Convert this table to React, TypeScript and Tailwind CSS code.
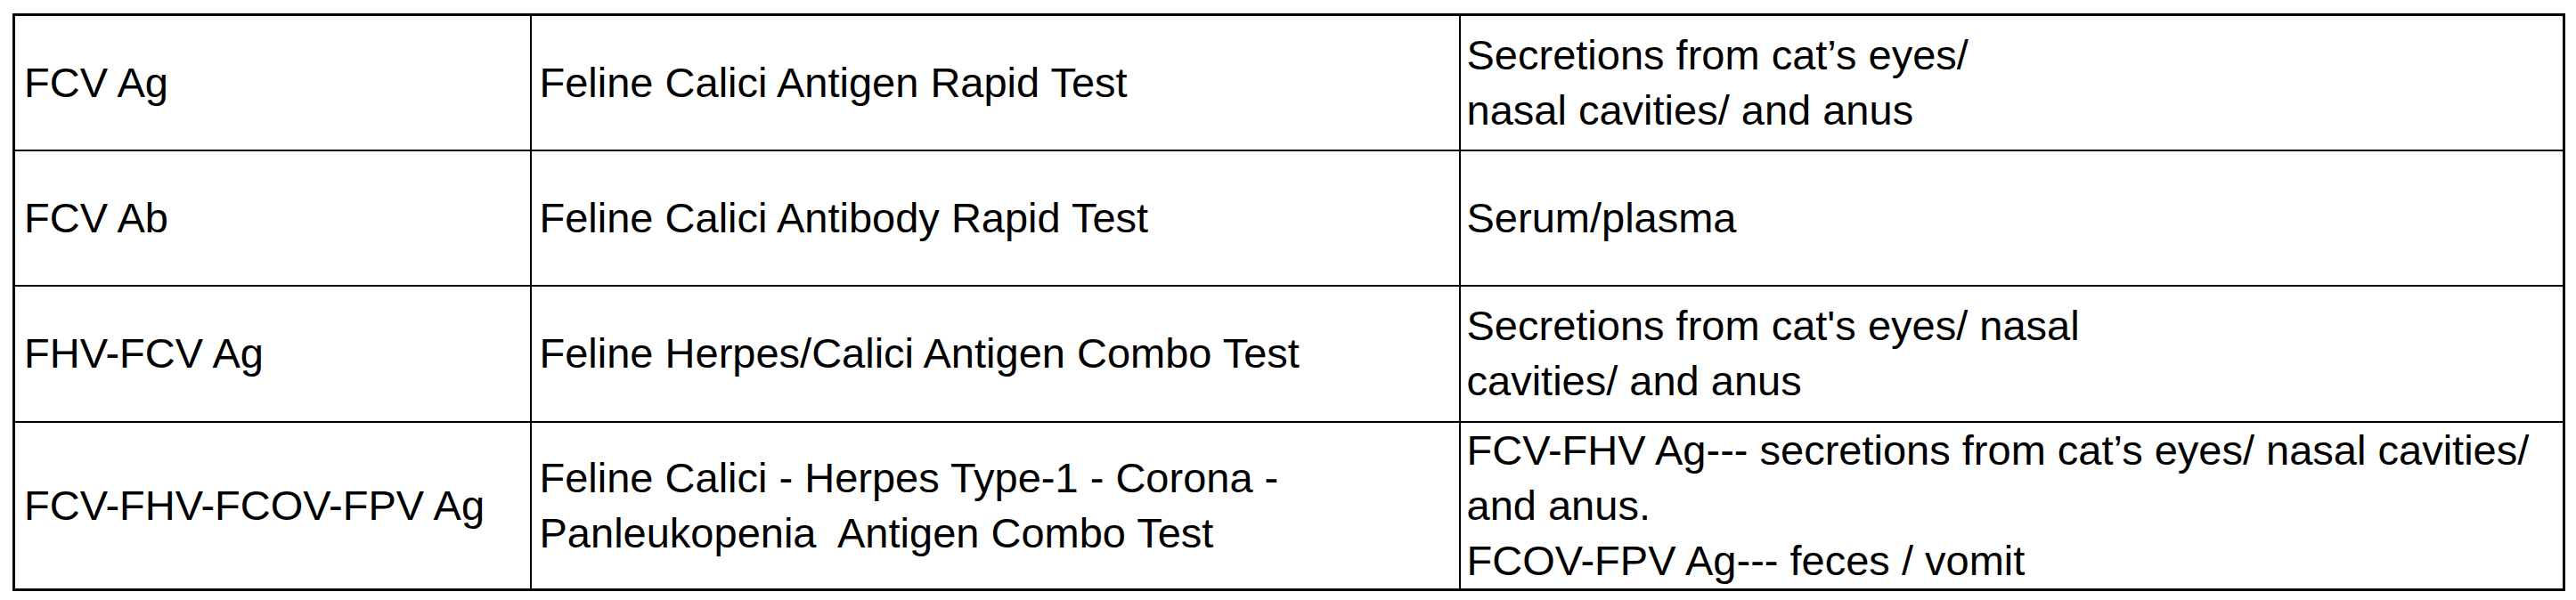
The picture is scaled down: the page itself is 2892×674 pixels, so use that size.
const rows: { code: string; name: string[]; sample: string[] }[] = [
  {
    code: "FCV Ag",
    name: ["Feline Calici Antigen Rapid Test"],
    sample: ["Secretions from cat’s eyes/", "nasal cavities/ and anus"],
  },
  {
    code: "FCV Ab",
    name: ["Feline Calici Antibody Rapid Test"],
    sample: ["Serum/plasma"],
  },
  {
    code: "FHV-FCV Ag",
    name: ["Feline Herpes/Calici Antigen Combo Test"],
    sample: ["Secretions from cat's eyes/ nasal", "cavities/ and anus"],
  },
  {
    code: "FCV-FHV-FCOV-FPV Ag",
    name: ["Feline Calici - Herpes Type-1 - Corona -", "Panleukopenia  Antigen Combo Test"],
    sample: [
      "FCV-FHV Ag--- secretions from cat’s eyes/ nasal cavities/",
      "and anus.",
      "FCOV-FPV Ag--- feces / vomit",
    ],
  },
];

const heights = ["h-[152px]", "h-[152px]", "h-[153px]", "h-[187px]"];

function Lines({ lines }: { lines: string[] }) {
  return (
    <>
      {lines.map((line, i) => (
        <div key={i} className="whitespace-pre">
          {line}
        </div>
      ))}
    </>
  );
}

export default function App() {
  return (
    <div className="min-h-screen bg-white pl-[14px] pt-[15px] font-['Liberation_Sans',Arial,sans-serif] text-[47px] leading-[62px] text-black">
      <table className="w-[2863px] table-fixed border-collapse border-[3px] border-black">
        <colgroup>
          <col className="w-[580px]" />
          <col className="w-[1043px]" />
          <col className="w-[1240px]" />
        </colgroup>
        <tbody>
          {rows.map((row, i) => (
            <tr key={row.code} className={heights[i]}>
              <td className="border-2 border-black pl-[10px] align-middle">
                <Lines lines={[row.code]} />
              </td>
              <td className="border-2 border-black pl-[9px] align-middle">
                <Lines lines={row.name} />
              </td>
              <td className="border-2 border-black pl-[7px] align-middle">
                <Lines lines={row.sample} />
              </td>
            </tr>
          ))}
        </tbody>
      </table>
    </div>
  );
}
